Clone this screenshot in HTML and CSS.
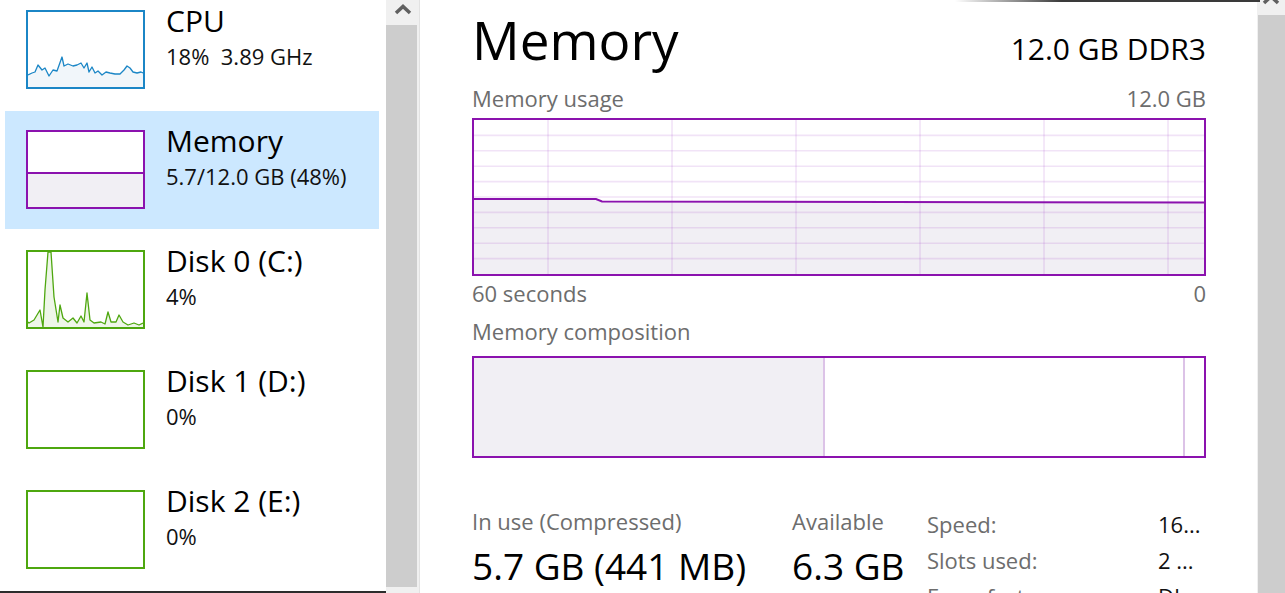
FILE: index.html
```html
<!DOCTYPE html>
<html lang="en">
<head>
<meta charset="utf-8">
<title>Task Manager - Memory</title>
<link rel="stylesheet" href="styles.css">
</head>
<body>
<div class="app">
  <aside class="sidebar">
    <ul class="list">
      <li class="item">
        <div class="thumb thumb-cpu">
          <svg viewBox="0 0 115 75" preserveAspectRatio="none">
            <polygon class="cpu-fill" points="0,63 4,61 7,60 10,53 14,58 17,56 21,64 25,58 29,59 34,45 36,54 40,52 45,54 49,53 53,51 56,56 59,51 61,60 64,55 67,61 70,59 74,63 78,60 82,61 87,62 92,62 96,58 99,54 102,56 105,60 109,61 113,60 115,61 115,75 0,75"/>
            <polyline class="cpu-line" points="0,63 4,61 7,60 10,53 14,58 17,56 21,64 25,58 29,59 34,45 36,54 40,52 45,54 49,53 53,51 56,56 59,51 61,60 64,55 67,61 70,59 74,63 78,60 82,61 87,62 92,62 96,58 99,54 102,56 105,60 109,61 113,60 115,61"/>
          </svg>
        </div>
        <div class="info">
          <div class="name">CPU</div>
          <div class="sub">18%&nbsp; 3.89 GHz</div>
        </div>
      </li>
      <li class="item selected">
        <div class="thumb thumb-mem">
          <div class="mem-free"></div>
          <div class="mem-used"></div>
        </div>
        <div class="info">
          <div class="name">Memory</div>
          <div class="sub">5.7/12.0 GB (48%)</div>
        </div>
      </li>
      <li class="item">
        <div class="thumb thumb-disk">
          <svg viewBox="0 0 115 75" preserveAspectRatio="none">
            <polygon class="disk-fill" points="0,70 1,71 6,68 12,58 15,75 17,38 20,0 23,0 26,45 30,70 32,53 35,66 40,70 45,66 49,71 53,64 56,70 59,41 62,68 66,71 73,70 77,72 80,60 83,70 88,70 91,63 95,70 100,73 106,71 111,73 115,71 115,75 0,75"/>
            <polyline class="disk-line" points="0,70 1,71 6,68 12,58 15,75 17,38 20,0 23,0 26,45 30,70 32,53 35,66 40,70 45,66 49,71 53,64 56,70 59,41 62,68 66,71 73,70 77,72 80,60 83,70 88,70 91,63 95,70 100,73 106,71 111,73 115,71"/>
          </svg>
        </div>
        <div class="info">
          <div class="name">Disk 0 (C:)</div>
          <div class="sub">4%</div>
        </div>
      </li>
      <li class="item">
        <div class="thumb thumb-disk"></div>
        <div class="info">
          <div class="name">Disk 1 (D:)</div>
          <div class="sub">0%</div>
        </div>
      </li>
      <li class="item">
        <div class="thumb thumb-disk"></div>
        <div class="info">
          <div class="name">Disk 2 (E:)</div>
          <div class="sub">0%</div>
        </div>
      </li>
    </ul>
  </aside>

  <div class="vscroll">
    <div class="vbtn">
      <svg width="18" height="12" viewBox="0 0 18 12"><path d="M2 10 L9 3.5 L16 10" fill="none" stroke="#606060" stroke-width="3.5"/></svg>
    </div>
    <div class="vthumb"></div>
  </div>

  <main class="main">
    <div class="head">
      <h1 class="title">Memory</h1>
      <div class="spec">12.0 GB DDR3</div>
    </div>

    <div class="row-labels labels-top">
      <span>Memory usage</span>
      <span>12.0 GB</span>
    </div>
    <div class="graph">
      <svg viewBox="0 0 730 154" preserveAspectRatio="none">
        <polygon class="mem-area" points="0,79 122,79 128,81.5 730,82.5 730,154 0,154"/>
        <g class="grid">
          <line x1="74" y1="0" x2="74" y2="154"/>
          <line x1="198" y1="0" x2="198" y2="154"/>
          <line x1="322" y1="0" x2="322" y2="154"/>
          <line x1="446" y1="0" x2="446" y2="154"/>
          <line x1="570" y1="0" x2="570" y2="154"/>
          <line x1="694" y1="0" x2="694" y2="154"/>
          <line x1="0" y1="15.4" x2="730" y2="15.4"/>
          <line x1="0" y1="30.8" x2="730" y2="30.8"/>
          <line x1="0" y1="46.2" x2="730" y2="46.2"/>
          <line x1="0" y1="61.6" x2="730" y2="61.6"/>
          <line x1="0" y1="77" x2="730" y2="77"/>
          <line x1="0" y1="92.4" x2="730" y2="92.4"/>
          <line x1="0" y1="107.8" x2="730" y2="107.8"/>
          <line x1="0" y1="123.2" x2="730" y2="123.2"/>
          <line x1="0" y1="138.6" x2="730" y2="138.6"/>
        </g>
        <polyline class="mem-line" points="0,79 122,79 128,81.5 730,82.5"/>
      </svg>
    </div>
    <div class="row-labels labels-axis">
      <span>60 seconds</span>
      <span>0</span>
    </div>

    <div class="row-labels labels-comp">
      <span>Memory composition</span>
    </div>
    <div class="comp">
      <div class="seg seg-use"></div>
      <div class="seg seg-standby"></div>
      <div class="seg seg-free"></div>
    </div>

    <div class="stats">
      <div class="stat stat-use">
        <div class="stat-label">In use (Compressed)</div>
        <div class="stat-value">5.7 GB (441 MB)</div>
      </div>
      <div class="stat stat-avail">
        <div class="stat-label">Available</div>
        <div class="stat-value">6.3 GB</div>
      </div>
      <dl class="spec-table">
        <dt>Speed:</dt><dd>16...</dd>
        <dt>Slots used:</dt><dd>2 ...</dd>
        <dt>Form factor:</dt><dd>DI...</dd>
      </dl>
    </div>
  </main>

  <div class="rscroll">
    <div class="rbtn">
      <svg width="18" height="12" viewBox="0 0 18 12"><path d="M2 10 L9 3.5 L16 10" fill="none" stroke="#606060" stroke-width="3.5"/></svg>
    </div>
    <div class="rthumb"></div>
  </div>

  <div class="edge"></div>
</div>
</body>
</html>
```

FILE: styles.css
```css
* { box-sizing: border-box; }

html, body {
  margin: 0;
  padding: 0;
  background: #ffffff;
}

body {
  width: 1285px;
  height: 593px;
  overflow: hidden;
  font-family: "Open Sans", "Noto Sans", "Liberation Sans", sans-serif;
  color: #000000;
}

.app {
  position: relative;
  display: flex;
  width: 1285px;
  height: 593px;
}

/* ---------- Sidebar ---------- */
.sidebar {
  flex: none;
  width: 386px;
  height: 593px;
  background: #ffffff;
  border-bottom: 2px solid #2d2d2d;
  overflow: hidden;
}

.list {
  list-style: none;
  margin: -9px 0 0 0;
  padding: 0;
  display: flex;
  flex-direction: column;
  gap: 2px;
}

.item {
  display: flex;
  align-items: flex-start;
  gap: 21px;
  height: 118px;
  width: 374px;
  margin-left: 5px;
  padding-left: 21px;
}

.item.selected {
  background: #cce8ff;
}

.thumb {
  flex: none;
  width: 119px;
  height: 79px;
  margin-top: 19px;
  border: 2px solid;
  background: #ffffff;
  overflow: hidden;
}

.thumb svg {
  display: block;
  width: 100%;
  height: 100%;
}

.thumb-cpu { border-color: #1b86c6; }
.cpu-fill { fill: #f1f6fa; stroke: none; }
.cpu-line { fill: none; stroke: #1b86c6; stroke-width: 1.3; stroke-linejoin: round; }

.thumb-mem {
  border-color: #8b12ae;
  display: flex;
  flex-direction: column;
}
.mem-free { height: 40px; background: #ffffff; }
.mem-used { flex: 1; background: #f1eff4; border-top: 2px solid #8b12ae; }

.thumb-disk { border-color: #4ea70f; }
.disk-fill { fill: #eef6e8; stroke: none; }
.disk-line { fill: none; stroke: #4ea70f; stroke-width: 1.3; stroke-linejoin: round; }

.info {
  padding-top: 12px;
  white-space: nowrap;
}

.name {
  font-size: 30px;
  line-height: 36px;
  color: #000000;
}

.sub {
  margin-top: 3px;
  font-size: 22px;
  line-height: 28px;
  color: #111111;
}

/* ---------- Scrollbars ---------- */
.vscroll {
  flex: none;
  width: 34px;
  height: 593px;
  background: #f0f0f0;
  border-right: 1px solid #e2e2e2;
  display: flex;
  flex-direction: column;
}

.vbtn {
  height: 25px;
  width: 33px;
  display: flex;
  justify-content: center;
  padding-top: 3px;
}

.vthumb {
  width: 31px;
  height: 562px;
  background: #cdcdcd;
}

.rscroll {
  flex: none;
  width: 28px;
  height: 593px;
  background: #f0f0f0;
  display: flex;
  flex-direction: column;
}

.rbtn {
  height: 15px;
  overflow: hidden;
  display: flex;
  justify-content: center;
}

.rbtn svg {
  margin-top: -7px;
}

.rthumb {
  flex: 1;
  margin-left: 1px;
  background: #cdcdcd;
}

.edge {
  position: absolute;
  top: 0;
  left: 955px;
  width: 305px;
  height: 2px;
  background: linear-gradient(to right, rgba(70, 70, 70, 0), #3a3a3a 35%, #3a3a3a 100%);
}

/* ---------- Main ---------- */
.main {
  flex: none;
  width: 837px;
  height: 593px;
  padding: 10px 51px 0 52px;
  background: #ffffff;
  overflow: hidden;
}

.head {
  display: flex;
  justify-content: space-between;
  align-items: baseline;
  height: 60px;
}

.title {
  margin: 0;
  font-size: 53px;
  line-height: 60px;
  font-weight: 400;
  color: #000000;
}

.spec {
  font-size: 30px;
  line-height: 36px;
  color: #000000;
}

.row-labels {
  display: flex;
  justify-content: space-between;
  font-size: 22px;
  line-height: 28px;
  color: #6d6d6d;
  white-space: nowrap;
}

.labels-top { margin-top: 14px; }
.labels-axis { margin-top: 3px; }
.labels-comp { margin-top: 10px; }

.graph {
  margin-top: 6px;
  height: 158px;
  border: 2px solid #8b12ae;
}

.graph svg {
  display: block;
  width: 730px;
  height: 154px;
}

.mem-area { fill: #f1eff4; stroke: none; }
.grid line { stroke: rgba(160, 70, 200, 0.15); stroke-width: 1.6; }
.mem-line { fill: none; stroke: #8b12ae; stroke-width: 2; }

.comp {
  margin-top: 11px;
  height: 102px;
  border: 2px solid #8b12ae;
  display: flex;
}

.seg { height: 100%; }
.seg-use {
  width: 351px;
  background: #f1eff4;
  border-right: 2px solid #dcc3e7;
}
.seg-standby {
  flex: 1;
  border-right: 2px solid #dcc3e7;
}
.seg-free { width: 19px; }

/* ---------- Stats ---------- */
.stats {
  display: flex;
  margin-top: 48px;
}

.stat {
  flex: none;
  padding-top: 1px;
  white-space: nowrap;
}

.stat-use { width: 320px; }
.stat-avail { width: 135px; }

.stat-label {
  font-size: 22px;
  line-height: 28px;
  color: #6d6d6d;
}

.stat-value {
  margin-top: 9px;
  font-size: 37px;
  line-height: 44px;
  color: #000000;
}

.spec-table {
  margin: 0;
  display: grid;
  grid-template-columns: 231px auto;
  font-size: 22px;
  line-height: 36px;
  white-space: nowrap;
}

.spec-table dt {
  color: #6d6d6d;
}

.spec-table dd {
  margin: 0;
  color: #111111;
}
```
